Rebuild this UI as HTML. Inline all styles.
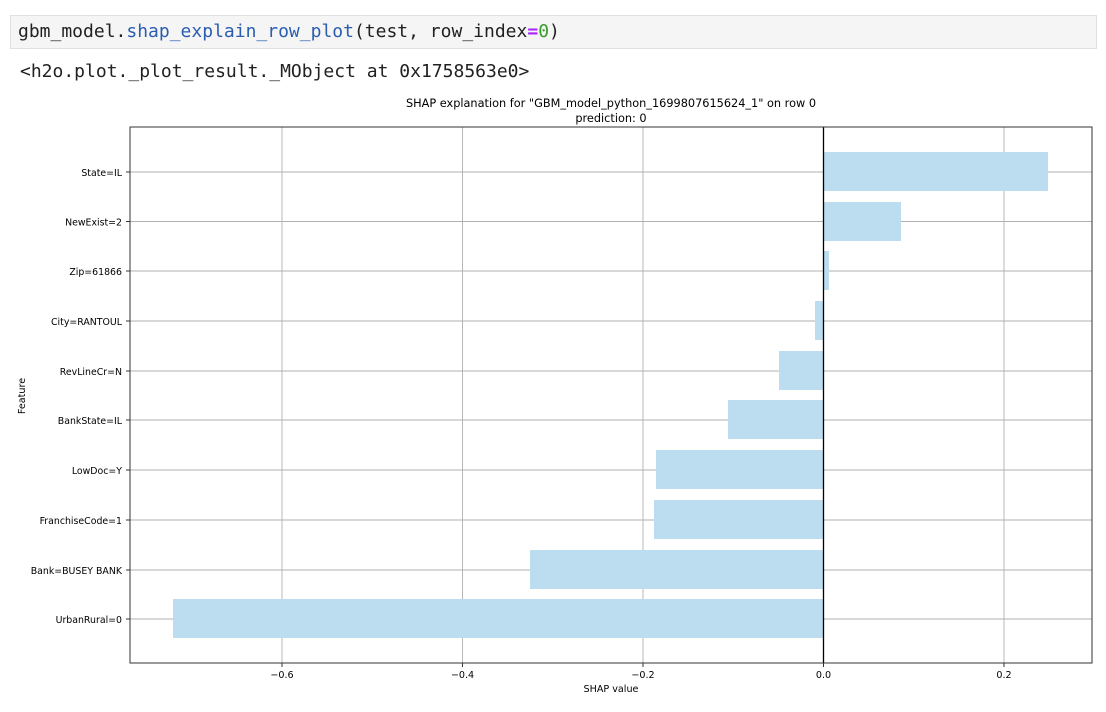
<!DOCTYPE html>
<html><head><style>
body{margin:0;width:1106px;height:712px;background:#fff;overflow:hidden;position:relative;font-family:"DejaVu Sans Mono","Liberation Mono",monospace}
.cell{position:absolute;left:10px;top:15px;width:1085px;height:32px;background:#f5f5f5;border:1px solid #e0e0e0}
.code{position:absolute;left:18px;top:20px;font-size:18px;line-height:24px;color:#212121;white-space:pre}
.out{position:absolute;left:20px;top:60px;font-size:18px;line-height:24px;color:#212121;white-space:pre}
svg{position:absolute;left:0;top:0}
svg text{font-family:"DejaVu Sans","Liberation Sans",sans-serif;fill:#000}
</style></head><body>
<div class="cell"></div>
<div class="code">gbm_model.<span style="color:#2a5db0">shap_explain_row_plot</span>(test, row_index<span style="color:#aa22ff;font-weight:bold">=</span><span style="color:#3a9a2a">0</span>)</div>
<div class="out">&lt;h2o.plot._plot_result._MObject at 0x1758563e0&gt;</div>
<svg width="1106" height="712">
<g stroke="#b0b0b0" stroke-width="0.9">
<line x1="282" y1="127" x2="282" y2="663"/><line x1="462.5" y1="127" x2="462.5" y2="663"/><line x1="643" y1="127" x2="643" y2="663"/><line x1="1004" y1="127" x2="1004" y2="663"/>
<line x1="130" y1="172" x2="1092" y2="172"/><line x1="130" y1="221.5" x2="1092" y2="221.5"/><line x1="130" y1="271" x2="1092" y2="271"/><line x1="130" y1="321" x2="1092" y2="321"/><line x1="130" y1="371" x2="1092" y2="371"/><line x1="130" y1="420" x2="1092" y2="420"/><line x1="130" y1="470" x2="1092" y2="470"/><line x1="130" y1="520" x2="1092" y2="520"/><line x1="130" y1="570" x2="1092" y2="570"/><line x1="130" y1="619" x2="1092" y2="619"/>
</g>
<g fill="#bcdcf0">
<rect x="824" y="152" width="224" height="39"/>
<rect x="824" y="202" width="77" height="39"/>
<rect x="824" y="251" width="5" height="39"/>
<rect x="815" y="301" width="9" height="39"/>
<rect x="779" y="351" width="45" height="39"/>
<rect x="728" y="400" width="96" height="39"/>
<rect x="656" y="450" width="168" height="39"/>
<rect x="654" y="500" width="170" height="39"/>
<rect x="530" y="550" width="294" height="39"/>
<rect x="173" y="599" width="651" height="39"/>
</g>
<line x1="823.5" y1="127" x2="823.5" y2="663" stroke="#000" stroke-width="1.3"/>
<rect x="130" y="127" width="962" height="536" fill="none" stroke="#333" stroke-width="1"/>
<g stroke="#333"><line x1="126" y1="172" x2="130" y2="172"/><line x1="126" y1="221.5" x2="130" y2="221.5"/><line x1="126" y1="271" x2="130" y2="271"/><line x1="126" y1="321" x2="130" y2="321"/><line x1="126" y1="371" x2="130" y2="371"/><line x1="126" y1="420" x2="130" y2="420"/><line x1="126" y1="470" x2="130" y2="470"/><line x1="126" y1="520" x2="130" y2="520"/><line x1="126" y1="570" x2="130" y2="570"/><line x1="126" y1="619" x2="130" y2="619"/>
<line x1="282" y1="663" x2="282" y2="667"/><line x1="462.5" y1="663" x2="462.5" y2="667"/><line x1="643" y1="663" x2="643" y2="667"/><line x1="823.5" y1="663" x2="823.5" y2="667"/><line x1="1004" y1="663" x2="1004" y2="667"/></g>
<g font-size="9.4" text-anchor="end">
<text x="122" y="176">State=IL</text><text x="122" y="225.5">NewExist=2</text><text x="122" y="275">Zip=61866</text><text x="122" y="325">City=RANTOUL</text><text x="122" y="375">RevLineCr=N</text><text x="122" y="424">BankState=IL</text><text x="122" y="474">LowDoc=Y</text><text x="122" y="524">FranchiseCode=1</text><text x="122" y="574">Bank=BUSEY BANK</text><text x="122" y="623">UrbanRural=0</text>
</g>
<g font-size="9.6" text-anchor="middle">
<text x="282" y="678">−0.6</text><text x="462.5" y="678">−0.4</text><text x="643" y="678">−0.2</text><text x="823.5" y="678">0.0</text><text x="1004" y="678">0.2</text>
<text x="611" y="692">SHAP value</text>
<text x="611" y="107" font-size="11.3">SHAP explanation for "GBM_model_python_1699807615624_1" on row 0</text>
<text x="611" y="122" font-size="11.3">prediction: 0</text>
<text transform="translate(25,396) rotate(-90)">Feature</text>
</g>
</svg>
</body></html>
